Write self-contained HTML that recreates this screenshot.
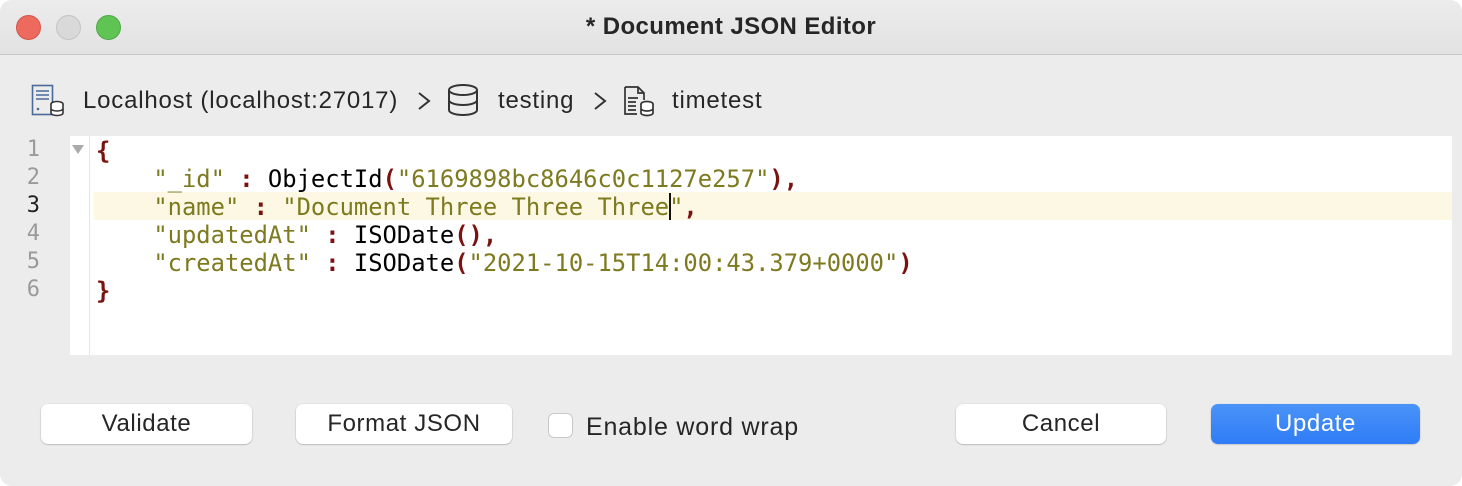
<!DOCTYPE html>
<html><head><meta charset="utf-8"><style>
*{margin:0;padding:0;box-sizing:border-box}
body{width:1462px;height:486px;background:#fff;overflow:hidden;font-family:"Liberation Sans",sans-serif}
.win{position:absolute;left:0;top:0;width:1462px;height:486px;background:#ececec;border-radius:12px;overflow:hidden}
.tb{position:absolute;left:0;top:0;width:100%;height:55px;background:linear-gradient(#ececec,#e2e2e2);border-bottom:1px solid #c8c8c8}
.dot{position:absolute;top:15px;width:25px;height:25px;border-radius:50%}
.title{position:absolute;top:0;left:0;width:100%;text-align:center;line-height:54px;font-size:24px;font-weight:bold;color:#262626;letter-spacing:0.4px}
.crumb{position:absolute;top:87px;font-size:24px;color:#262626;letter-spacing:0.8px}
.ed{position:absolute;left:70px;top:136px;width:1382px;height:219px;background:#fff}
.gut{position:absolute;left:89px;top:136px;width:1px;height:219px;background:#e6e6e6}
.hl{position:absolute;left:94px;top:192px;width:1358px;height:28px;background:#fdf8e4}
.ln{position:absolute;left:22px;width:18px;text-align:right;font-family:"DejaVu Sans Mono",monospace;font-size:22px;color:#9a9a9a}
.code{position:absolute;left:96px;font-family:"DejaVu Sans Mono",monospace;font-size:23.8px;white-space:pre;color:#000;letter-spacing:0}
.s{color:#7d7a1f}.p{color:#7a1210;font-weight:bold}
.btn{position:absolute;top:404px;height:40px;background:#fff;border-radius:7px;box-shadow:0 0.5px 1.5px rgba(0,0,0,.35);font-size:24px;color:#262626;text-align:center;line-height:39px;letter-spacing:0.6px}
</style></head><body><div class="win">
<div class="tb">
<div class="dot" style="left:16px;background:#ee6a5f;border:1px solid #d5554b"></div>
<div class="dot" style="left:56px;background:#d9d9d9;border:1px solid #c4c4c4"></div>
<div class="dot" style="left:96px;background:#5fc454;border:1px solid #4ea845"></div>
<div class="title">* Document JSON Editor</div>
</div>
<svg style="position:absolute;left:30px;top:83px" width="36" height="36" viewBox="0 0 36 36" fill="none" stroke-width="1.6">
<rect x="2.5" y="2.5" width="20" height="29" stroke="#4a6a9a"/><path d="M6 8h13M6 12h13M6 16h13" stroke="#4a6a9a"/><circle cx="8" cy="26" r="1.3" fill="#4a6a9a" stroke="none"/>
<ellipse cx="27" cy="21" rx="6" ry="2.5" fill="#fff" stroke="#333"/><path d="M21 21v9c0 1.5 2.7 2.5 6 2.5s6-1 6-2.5v-9M21 25.5c0 1.5 2.7 2.5 6 2.5s6-1 6-2.5" fill="#fff" stroke="#333"/></svg>
<div class="crumb" style="left:83px">Localhost (localhost:27017)</div>
<svg style="position:absolute;left:415px;top:89px" width="18" height="24"><path d="M4 4l10 8-10 8" stroke="#333" stroke-width="2" fill="none"/></svg>
<svg style="position:absolute;left:446px;top:83px" width="34" height="34" viewBox="0 0 34 34" fill="none" stroke="#333" stroke-width="2"><ellipse cx="17" cy="7" rx="14" ry="5"/><path d="M3 7v20c0 2.8 6.3 5 14 5s14-2.2 14-5V7M3 17c0 2.8 6.3 5 14 5s14-2.2 14-5"/></svg>
<div class="crumb" style="left:498px">testing</div>
<svg style="position:absolute;left:591px;top:89px" width="18" height="24"><path d="M4 4l10 8-10 8" stroke="#333" stroke-width="2" fill="none"/></svg>
<svg style="position:absolute;left:623px;top:85px" width="32" height="32" viewBox="0 0 32 32" fill="none" stroke="#333" stroke-width="1.7"><path d="M2 2h13l6 6v7M2 2v27h12M15 2v6h6"/><path d="M5 13h10M5 17h8M5 21h8M5 25h8"/><ellipse cx="24" cy="19" rx="6" ry="2.5" fill="#fff"/><path d="M18 19v9c0 1.4 2.7 2.5 6 2.5s6-1.1 6-2.5v-9M18 23.5c0 1.4 2.7 2.5 6 2.5s6-1.1 6-2.5" fill="#fff"/></svg>
<div class="crumb" style="left:672px">timetest</div>
<div class="ed"></div><div class="hl"></div><div class="gut"></div>
<svg style="position:absolute;left:72px;top:145px" width="12" height="10"><path d="M0 0h12L6 9z" fill="#aaa"/></svg>
<div class="ln" style="top:137px">1</div><div class="ln" style="top:165px">2</div><div class="ln" style="top:193px;color:#222">3</div><div class="ln" style="top:221px">4</div><div class="ln" style="top:249px">5</div><div class="ln" style="top:277px">6</div>
<div class="code" style="top:137px"><span class="p">{</span></div>
<div class="code" style="top:165px">    <span class="s">"_id"</span> <span class="p">:</span> ObjectId<span class="p">(</span><span class="s">"6169898bc8646c0c1127e257"</span><span class="p">),</span></div>
<div class="code" style="top:193px">    <span class="s">"name"</span> <span class="p">:</span> <span class="s">"Document Three Three Three"</span><span class="p">,</span></div>
<div style="position:absolute;left:669px;top:193px;width:2px;height:27px;background:#111"></div>
<div class="code" style="top:221px">    <span class="s">"updatedAt"</span> <span class="p">:</span> ISODate<span class="p">(),</span></div>
<div class="code" style="top:249px">    <span class="s">"createdAt"</span> <span class="p">:</span> ISODate<span class="p">(</span><span class="s">"2021-10-15T14:00:43.379+0000"</span><span class="p">)</span></div>
<div class="code" style="top:277px"><span class="p">}</span></div>
<div class="btn" style="left:41px;width:211px">Validate</div>
<div class="btn" style="left:296px;width:216px">Format JSON</div>
<div style="position:absolute;left:548px;top:413px;width:25px;height:25px;background:#fff;border-radius:6px;box-shadow:0 0 0 1px #c8c8c8 inset"></div>
<div style="position:absolute;left:586px;top:413px;font-size:25px;color:#262626;letter-spacing:0.8px">Enable word wrap</div>
<div class="btn" style="left:956px;width:210px">Cancel</div>
<div class="btn" style="left:1211px;width:209px;background:linear-gradient(#4a93f8,#2f7cf6);color:#fff;box-shadow:0 0.5px 1.5px rgba(0,0,0,.25)">Update</div>
</div></body></html>
